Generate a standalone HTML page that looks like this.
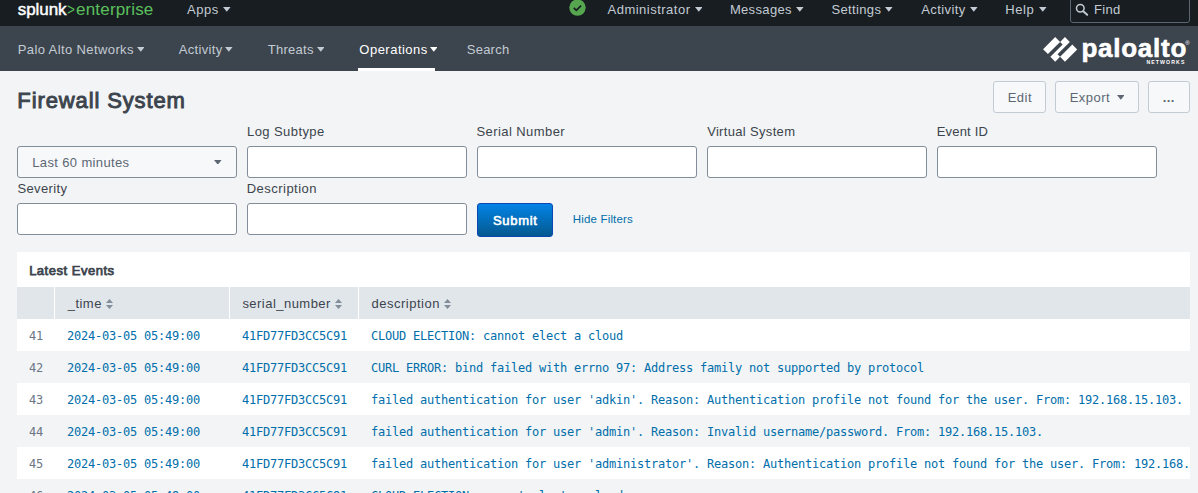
<!DOCTYPE html>
<html lang="en">
<head>
<meta charset="utf-8">
<title>Firewall System | Splunk</title>
<style>
*{box-sizing:border-box;}
html,body{margin:0;padding:0;}
body{width:1198px;height:493px;overflow:hidden;background:#f2f4f5;font-family:"Liberation Sans",sans-serif;font-size:13px;color:#3c444d;position:relative;}
.abs{position:absolute;white-space:nowrap;}
.tx{position:absolute;white-space:nowrap;line-height:1;height:1em;z-index:5;}
#topbar{position:absolute;left:0;top:0;width:1198px;height:26px;background:#171d21;}
#logo{position:absolute;left:18px;top:-2px;height:22px;line-height:22px;font-size:18px;color:#fff;white-space:nowrap;letter-spacing:-0.6px;}
#logo b{font-weight:bold;}
#logo span{color:#5cc05c;font-weight:normal;}
#findbox{position:absolute;left:1070px;top:-6px;width:120px;height:29px;border:1px solid #5c6773;border-radius:3px;}
#appbar{position:absolute;left:0;top:26px;width:1198px;height:45px;background:#3c444d;}
#appbar .ul{position:absolute;left:358px;top:42px;width:77px;height:3px;background:#fff;}
.btn{position:absolute;top:81px;height:32px;border:1px solid #c3cbd4;border-radius:3px;background:#f7f8fa;}
.inp{position:absolute;width:220px;height:32px;border:1px solid #818d99;border-radius:3px;background:#fff;}
#submitb{position:absolute;left:477px;top:203px;width:76px;height:34px;border:1px solid #0b47b3;border-radius:3px;background:linear-gradient(#0283e6,#04598f);}
#panel{position:absolute;left:17px;top:252px;width:1173px;height:260px;background:#fff;}
#thead{position:absolute;left:17px;top:287px;width:1173px;height:32px;background:#e1e6eb;}
#thead .sep{position:absolute;top:0;width:1px;height:32px;background:#fff;}
.row{position:absolute;left:17px;width:1173px;height:32px;font-family:"DejaVu Sans Mono","Liberation Mono",monospace;font-size:12px;line-height:34px;letter-spacing:-0.224px;color:#006eaa;overflow:hidden;}
.row.odd{background:#f2f4f5;}
.row span{position:absolute;top:0;white-space:nowrap;}
.row .n{left:12px;color:#6b7785;}
.row .t{left:50px;}
.row .s{left:225px;}
.row .d{left:354px;}
</style>
</head>
<body>
<div id="topbar">
  <svg class="abs" style="left:569px;top:-1px" width="17" height="17" viewBox="0 0 17 17"><circle cx="8.5" cy="8.6" r="8.2" fill="#56a650"/><path d="M4.8 8.9l2.5 2.5 4.8-4.8" fill="none" stroke="#171d21" stroke-width="1.7"/></svg>
  <div id="findbox"></div>
  <svg class="abs" style="left:1075px;top:2.5px" width="14" height="14" viewBox="0 0 14 14"><circle cx="5.3" cy="5.3" r="3.8" fill="none" stroke="#c3cbd4" stroke-width="1.5"/><path d="M8.2 8.2l4 3.6" stroke="#c3cbd4" stroke-width="2" stroke-linecap="round"/></svg>
</div>
<span class="tx" id="lg1" style="left:17.74px;top:0.61px;font-size:17px;letter-spacing:-0.066px;color:#fff;font-weight:normal;-webkit-text-stroke:0.45px #fff;">splunk</span><span class="tx" id="lg2" style="left:67.20px;top:0.61px;font-size:17px;letter-spacing:0.000px;color:#5cc05c;font-weight:normal;transform:scaleX(0.8);transform-origin:0 0;">&gt;</span><span class="tx" id="lg3" style="left:76.11px;top:0.61px;font-size:17px;letter-spacing:0.176px;color:#5cc05c;font-weight:normal;">enterprise</span>
<span class="tx" id="apps" style="left:187.10px;top:3.00px;font-size:13px;letter-spacing:0.521px;color:#c3cbd4;font-weight:normal;">Apps</span><svg class="abs" style="left:223.15px;top:7px" width="7.6" height="4.7" viewBox="0 0 7.6 4.7"><path d="M0 0h7.6l-3.8 4.7z" fill="#c3cbd4"/></svg>
<span class="tx" id="admin" style="left:607.57px;top:3.00px;font-size:13px;letter-spacing:0.485px;color:#c3cbd4;font-weight:normal;">Administrator</span><svg class="abs" style="left:694.65px;top:7px" width="7.6" height="4.7" viewBox="0 0 7.6 4.7"><path d="M0 0h7.6l-3.8 4.7z" fill="#c3cbd4"/></svg>
<span class="tx" id="msgs" style="left:729.89px;top:3.00px;font-size:13px;letter-spacing:0.345px;color:#c3cbd4;font-weight:normal;">Messages</span><svg class="abs" style="left:796.4px;top:7px" width="7.6" height="4.7" viewBox="0 0 7.6 4.7"><path d="M0 0h7.6l-3.8 4.7z" fill="#c3cbd4"/></svg>
<span class="tx" id="sett" style="left:831.42px;top:3.00px;font-size:13px;letter-spacing:0.368px;color:#c3cbd4;font-weight:normal;">Settings</span><svg class="abs" style="left:885.4px;top:7px" width="7.6" height="4.7" viewBox="0 0 7.6 4.7"><path d="M0 0h7.6l-3.8 4.7z" fill="#c3cbd4"/></svg>
<span class="tx" id="act1" style="left:921.25px;top:3.00px;font-size:13px;letter-spacing:0.415px;color:#c3cbd4;font-weight:normal;">Activity</span><svg class="abs" style="left:970.4px;top:7px" width="7.6" height="4.7" viewBox="0 0 7.6 4.7"><path d="M0 0h7.6l-3.8 4.7z" fill="#c3cbd4"/></svg>
<span class="tx" id="help" style="left:1005.21px;top:3.00px;font-size:13px;letter-spacing:0.636px;color:#c3cbd4;font-weight:normal;">Help</span><svg class="abs" style="left:1039.15px;top:7px" width="7.6" height="4.7" viewBox="0 0 7.6 4.7"><path d="M0 0h7.6l-3.8 4.7z" fill="#c3cbd4"/></svg>
<span class="tx" id="find" style="left:1093.98px;top:3.00px;font-size:13px;letter-spacing:0.297px;color:#c3cbd4;font-weight:normal;">Find</span>
<div id="appbar">
  <div class="ul"></div>
  <svg class="abs" style="left:1040px;top:8px" width="42" height="30" viewBox="0 0 690 493"><g fill="#fff"><path d="M250 50L330 130L130 330L50 250z"/><path d="M410 50L490 130L287.5 332.5L330 375L250 455L170 375L372.5 172.5L330 130z"/><path d="M531 174L611 254L410 455L330 375z"/></g></svg>
  <div class="abs" style="left:1185.3px;top:14px;font-size:6px;line-height:6px;color:#fff;">®</div>
</div>
<span class="tx" id="pa" style="left:1081.42px;top:35.19px;font-size:26px;letter-spacing:0.753px;color:#fff;font-weight:bold;-webkit-text-stroke:0.6px #fff;">paloalto</span><span class="tx" id="pn" style="left:1146.46px;top:60.00px;font-size:5.2px;letter-spacing:1.093px;color:#fff;font-weight:bold;">NETWORKS</span>
<span class="tx" id="pan" style="left:17.69px;top:43.00px;font-size:13px;letter-spacing:0.395px;color:#c3cbd4;font-weight:normal;">Palo Alto Networks</span><svg class="abs" style="left:136.9px;top:47px" width="7.6" height="4.7" viewBox="0 0 7.6 4.7"><path d="M0 0h7.6l-3.8 4.7z" fill="#c3cbd4"/></svg>
<span class="tx" id="act2" style="left:178.81px;top:43.00px;font-size:13px;letter-spacing:0.319px;color:#c3cbd4;font-weight:normal;">Activity</span><svg class="abs" style="left:225.4px;top:47px" width="7.6" height="4.7" viewBox="0 0 7.6 4.7"><path d="M0 0h7.6l-3.8 4.7z" fill="#c3cbd4"/></svg>
<span class="tx" id="thr" style="left:267.83px;top:43.00px;font-size:13px;letter-spacing:0.265px;color:#c3cbd4;font-weight:normal;">Threats</span><svg class="abs" style="left:316.9px;top:47px" width="7.6" height="4.7" viewBox="0 0 7.6 4.7"><path d="M0 0h7.6l-3.8 4.7z" fill="#c3cbd4"/></svg>
<span class="tx" id="ops" style="left:359.35px;top:43.00px;font-size:13px;letter-spacing:0.483px;color:#fff;font-weight:normal;">Operations</span><svg class="abs" style="left:429.9px;top:47px" width="7.6" height="4.7" viewBox="0 0 7.6 4.7"><path d="M0 0h7.6l-3.8 4.7z" fill="#fff"/></svg>
<span class="tx" id="srch" style="left:466.78px;top:43.00px;font-size:13px;letter-spacing:0.238px;color:#c3cbd4;font-weight:normal;">Search</span>
<span class="tx" id="title" style="left:17.33px;top:89.63px;font-size:22px;letter-spacing:0.883px;color:#3c444d;font-weight:normal;-webkit-text-stroke:0.95px #3c444d;">Firewall System</span>
<div class="btn" style="left:993px;width:53px;"></div><span class="tx" id="edit" style="left:1007.71px;top:91.00px;font-size:13px;letter-spacing:0.472px;color:#5c6773;font-weight:normal;">Edit</span>
<div class="btn" style="left:1055px;width:84px;"></div><span class="tx" id="export" style="left:1069.69px;top:91.00px;font-size:13px;letter-spacing:0.455px;color:#5c6773;font-weight:normal;">Export</span><svg class="abs" style="left:1116.9px;top:95px" width="7.6" height="4.7" viewBox="0 0 7.6 4.7"><path d="M0 0h7.6l-3.8 4.7z" fill="#5c6773"/></svg>
<div class="btn" style="left:1148px;width:42px;"></div><span class="tx" id="dots" style="left:1162.76px;top:91.00px;font-size:13px;letter-spacing:0.388px;color:#5c6773;font-weight:bold;">...</span>

<div class="inp" style="left:17px;top:146px;background:#f7f8fa;"></div><span class="tx" id="last" style="left:32.24px;top:156.00px;font-size:13px;letter-spacing:0.364px;color:#5c6773;font-weight:normal;">Last 60 minutes</span><svg class="abs" style="left:214.4px;top:159.8px" width="7.6" height="4.7" viewBox="0 0 7.6 4.7"><path d="M0 0h7.6l-3.8 4.7z" fill="#5c6773"/></svg>
<span class="tx" id="l1" style="left:247.01px;top:125.00px;font-size:13px;letter-spacing:0.422px;color:#3c444d;font-weight:normal;">Log Subtype</span><div class="inp" style="left:247px;top:146px"></div>
<span class="tx" id="l2" style="left:476.46px;top:125.00px;font-size:13px;letter-spacing:0.425px;color:#3c444d;font-weight:normal;">Serial Number</span><div class="inp" style="left:477px;top:146px"></div>
<span class="tx" id="l3" style="left:707.14px;top:125.00px;font-size:13px;letter-spacing:0.328px;color:#3c444d;font-weight:normal;">Virtual System</span><div class="inp" style="left:707px;top:146px"></div>
<span class="tx" id="l4" style="left:936.71px;top:125.00px;font-size:13px;letter-spacing:0.195px;color:#3c444d;font-weight:normal;">Event ID</span><div class="inp" style="left:937px;top:146px"></div>
<span class="tx" id="l5" style="left:17.44px;top:182.00px;font-size:13px;letter-spacing:0.377px;color:#3c444d;font-weight:normal;">Severity</span><div class="inp" style="left:17px;top:203px"></div>
<span class="tx" id="l6" style="left:246.66px;top:182.00px;font-size:13px;letter-spacing:0.484px;color:#3c444d;font-weight:normal;">Description</span><div class="inp" style="left:247px;top:203px"></div>
<div id="submitb"></div><span class="tx" id="submit" style="left:493.00px;top:214.00px;font-size:13px;letter-spacing:0.674px;color:#fff;font-weight:normal;-webkit-text-stroke:0.6px #fff;">Submit</span>
<span class="tx" id="hide" style="left:572.81px;top:214.27px;font-size:11.5px;letter-spacing:0.168px;color:#006eaa;font-weight:normal;">Hide Filters</span>

<div id="panel"></div>
<span class="tx" id="latest" style="left:29.13px;top:264.25px;font-size:13px;letter-spacing:0.510px;color:#3c444d;font-weight:normal;-webkit-text-stroke:0.75px #3c444d;">Latest Events</span>
<div id="thead">
  <div class="sep" style="left:37px"></div><div class="sep" style="left:212px"></div><div class="sep" style="left:341px"></div>
</div>
<span class="tx" id="h1" style="left:67.81px;top:297.00px;font-size:13px;letter-spacing:0.445px;color:#3c444d;font-weight:normal;">_time</span><svg class="abs" style="left:106px;top:298.5px" width="7" height="10" viewBox="0 0 7 10"><path d="M0 4l3.5-4 3.5 4z" fill="#818d99"/><path d="M0 6l3.5 4 3.5-4z" fill="#818d99"/></svg>
<span class="tx" id="h2" style="left:242.42px;top:297.00px;font-size:13px;letter-spacing:0.468px;color:#3c444d;font-weight:normal;">serial_number</span><svg class="abs" style="left:335px;top:298.5px" width="7" height="10" viewBox="0 0 7 10"><path d="M0 4l3.5-4 3.5 4z" fill="#818d99"/><path d="M0 6l3.5 4 3.5-4z" fill="#818d99"/></svg>
<span class="tx" id="h3" style="left:371.48px;top:297.00px;font-size:13px;letter-spacing:0.507px;color:#3c444d;font-weight:normal;">description</span><svg class="abs" style="left:444px;top:298.5px" width="7" height="10" viewBox="0 0 7 10"><path d="M0 4l3.5-4 3.5 4z" fill="#818d99"/><path d="M0 6l3.5 4 3.5-4z" fill="#818d99"/></svg>
<div class="row" style="top:319px"><span class="n">41</span><span class="t">2024-03-05 05:49:00</span><span class="s">41FD77FD3CC5C91</span><span class="d">CLOUD ELECTION: cannot elect a cloud</span></div>
<div class="row odd" style="top:351px"><span class="n">42</span><span class="t">2024-03-05 05:49:00</span><span class="s">41FD77FD3CC5C91</span><span class="d">CURL ERROR: bind failed with errno 97: Address family not supported by protocol</span></div>
<div class="row" style="top:383px"><span class="n">43</span><span class="t">2024-03-05 05:49:00</span><span class="s">41FD77FD3CC5C91</span><span class="d">failed authentication for user 'adkin'. Reason: Authentication profile not found for the user. From: 192.168.15.103.</span></div>
<div class="row odd" style="top:415px"><span class="n">44</span><span class="t">2024-03-05 05:49:00</span><span class="s">41FD77FD3CC5C91</span><span class="d">failed authentication for user 'admin'. Reason: Invalid username/password. From: 192.168.15.103.</span></div>
<div class="row" style="top:447px"><span class="n">45</span><span class="t">2024-03-05 05:49:00</span><span class="s">41FD77FD3CC5C91</span><span class="d">failed authentication for user 'administrator'. Reason: Authentication profile not found for the user. From: 192.168.15.103.</span></div>
<div class="row odd" style="top:479px"><span class="n">46</span><span class="t">2024-03-05 05:49:00</span><span class="s">41FD77FD3CC5C91</span><span class="d">CLOUD ELECTION: cannot elect a cloud</span></div>

</body>
</html>
